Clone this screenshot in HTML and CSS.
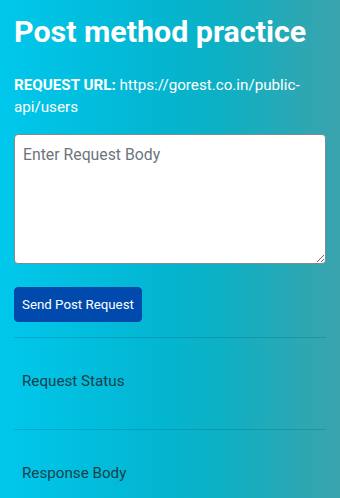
FILE: index.html
```html
<!DOCTYPE html>
<html lang="en">
<head>
<meta charset="utf-8">
<title>Post method practice</title>
<link rel="stylesheet" href="styles.css">
</head>
<body>
<main class="page">
  <h1 class="title">Post method practice</h1>
  <p class="url"><strong>REQUEST URL:</strong> https://gorest.co.in/public-api/users</p>
  <textarea class="body-input" placeholder="Enter Request Body"></textarea>
  <button class="send-btn" type="button">Send Post Request</button>
  <hr class="divider">
  <div class="section">Request Status</div>
  <hr class="divider">
  <div class="section">Response Body</div>
</main>
</body>
</html>
```

FILE: styles.css
```css
html, body {
  margin: 0;
  padding: 0;
}
body {
  background: #d9f6fb;
  font-family: Roboto, "Liberation Sans", Arial, sans-serif;
  overflow: hidden;
}
.page {
  display: flex;
  flex-direction: column;
  align-items: flex-start;
  padding: 13px 14px 13px;
  background: linear-gradient(to right, #00c8ec 0%, #03b6d2 45%, #0db0c4 65%, #3ba3ac 100%);
}
.title {
  margin: 0;
  font-size: 30.4px;
  line-height: 38px;
  font-weight: 700;
  color: #ffffff;
}
.url {
  margin: 23px 0 0;
  font-size: 15.2px;
  line-height: 22px;
  color: #ffffff;
}
.url strong {
  font-weight: 700;
}
.body-input {
  box-sizing: border-box;
  margin-top: 16px;
  width: 312px;
  height: 130px;
  padding: 8px 8px;
  border: 1px solid #7f8c8f;
  border-radius: 4px;
  background: #ffffff;
  font-family: inherit;
  font-size: 15.8px;
  line-height: 24px;
  color: #212529;
  resize: vertical;
}
.body-input::placeholder {
  color: #6c757d;
}
.send-btn {
  box-sizing: border-box;
  margin-top: 23px;
  height: 35px;
  padding: 0 7px;
  border: 1px solid #0a47a6;
  border-radius: 4px;
  background: #004aad;
  color: #ffffff;
  font-family: inherit;
  font-size: 13.3px;
}
.divider {
  align-self: stretch;
  margin: 15px 0 0;
  border: 0;
  border-top: 1px solid rgba(0, 60, 80, 0.18);
  height: 0;
}
.section + .divider {
  margin-top: 0;
}
.section {
  align-self: stretch;
  padding: 31px 8px 36px;
  font-size: 15.2px;
  line-height: 24px;
  color: #17404d;
}
.section:last-child {
  padding-bottom: 0;
}
```
